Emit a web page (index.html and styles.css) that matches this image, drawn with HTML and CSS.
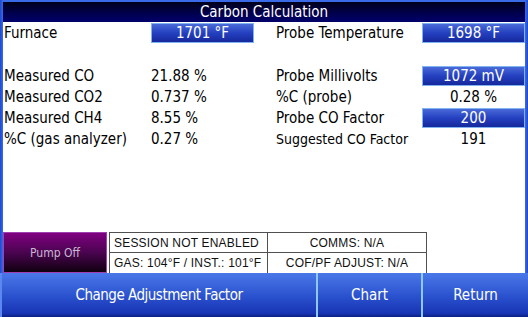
FILE: index.html
```html
<!DOCTYPE html>
<html>
<head>
<meta charset="utf-8">
<link rel="stylesheet" href="styles.css">
</head>
<body>
<div class="screen">
  <div class="title">Carbon Calculation</div>
  <div class="content">
    <div class="row first">
      <div class="half left">
        <span class="label">Furnace</span>
        <span class="box">1701 °F</span>
      </div>
      <div class="half right">
        <span class="label">Probe Temperature</span>
        <span class="box">1698 °F</span>
      </div>
    </div>
    <div class="block">
      <div class="row">
        <div class="half left"><span class="label">Measured CO</span><span class="val">21.88 %</span></div>
        <div class="half right"><span class="label">Probe Millivolts</span><span class="box">1072 mV</span></div>
      </div>
      <div class="row">
        <div class="half left"><span class="label">Measured CO2</span><span class="val">0.737 %</span></div>
        <div class="half right"><span class="label">%C (probe)</span><span class="cval">0.28 %</span></div>
      </div>
      <div class="row">
        <div class="half left"><span class="label">Measured CH4</span><span class="val">8.55 %</span></div>
        <div class="half right"><span class="label">Probe CO Factor</span><span class="box">200</span></div>
      </div>
      <div class="row">
        <div class="half left"><span class="label">%C (gas analyzer)</span><span class="val">0.27 %</span></div>
        <div class="half right"><span class="label small">Suggested CO Factor</span><span class="cval">191</span></div>
      </div>
    </div>
  </div>
  <div class="status">
    <div class="pump">Pump Off</div>
    <div class="table">
      <div class="cell">SESSION NOT ENABLED</div>
      <div class="cell c">COMMS: N/A</div>
      <div class="cell">GAS: 104°F / INST.: 101°F</div>
      <div class="cell c">COF/PF ADJUST: N/A</div>
    </div>
  </div>
  <div class="buttons">
    <div class="btn wide">Change Adjustment Factor</div>
    <div class="btn mid">Chart</div>
    <div class="btn last">Return</div>
  </div>
</div>
</body>
</html>
```
FILE: styles.css
```css
html, body {
  margin: 0;
  padding: 0;
  background: #2a56d8;
}
.screen {
  width: 528px;
  height: 317px;
  display: flex;
  flex-direction: column;
  font-family: "DejaVu Sans Condensed", "DejaVu Sans", sans-serif;
  background: linear-gradient(90deg, #1c48d0 0, #3a6ae8 3px, #3a6ae8 525px, #1c48d0 528px);
  overflow: hidden;
}
.title {
  margin: 2px 3px 0 3px;
  height: 20px;
  background: linear-gradient(#00001c, #000050 60%, #00006c);
  color: #ffffff;
  font-size: 15px;
  text-align: center;
  line-height: 20px;
}
.content {
  margin: 0 3px;
  background: #ffffff;
  height: 210px;
  font-size: 15px;
  color: #000000;
}
.row {
  display: flex;
  height: 21px;
  align-items: center;
}
.row.first {
  height: 20px;
  margin-top: 1px;
}
.block {
  margin-top: 22px;
}
.half {
  display: flex;
  align-items: center;
  height: 100%;
}
.half.left {
  width: 273px;
}
.half.right {
  width: 249px;
}
.left .label {
  width: 147px;
  padding-left: 1px;
}
.right .label {
  width: 146px;
}
.label.small {
  font-size: 14px;
}
.box {
  width: 101px;
  height: 18px;
  border: 1px solid #7fb4f0;
  background: linear-gradient(#4a6ad8, #2440c0 50%, #16289c);
  color: #ffffff;
  text-align: center;
  line-height: 18px;
}
.val {
  padding-left: 0;
}
.cval {
  width: 103px;
  text-align: center;
}
.status {
  display: flex;
  height: 41px;
  margin: 0 3px;
  background: #ffffff;
}
.pump {
  width: 102px;
  height: 39px;
  border: 1px solid #a040b0;
  background: linear-gradient(#800080, #4a0450 50%, #100010);
  color: #c8b8d0;
  font-size: 12px;
  display: flex;
  align-items: center;
  justify-content: center;
}
.table {
  margin-left: 2px;
  width: 316px;
  height: 40px;
  border: 1px solid #505050;
  display: grid;
  grid-template-columns: 158px 158px;
  grid-template-rows: 20px 20px;
  font-family: "Liberation Sans", Arial, sans-serif;
  font-size: 12px;
  color: #101010;
}
.cell {
  display: flex;
  align-items: center;
  padding-left: 4px;
  border-right: 1px solid #505050;
  border-bottom: 1px solid #505050;
  letter-spacing: 0.2px;
}
.cell.c {
  justify-content: center;
  padding-left: 0;
  border-right: none;
}
.cell:nth-child(3), .cell:nth-child(4) {
  border-bottom: none;
}
.buttons {
  display: flex;
  height: 44px;
  background: linear-gradient(#4a78e8, #2c54d0 50%, #1834b4 92%, #0c2080 100%);
  border-left: 2px solid #5a88f0;
}
.btn {
  color: #ffffff;
  font-size: 15px;
  display: flex;
  align-items: center;
  justify-content: center;
}
.btn.wide {
  width: 314px;
  letter-spacing: -0.5px;
}
.btn.mid {
  width: 103px;
  border-left: 2px solid #8cc8f8;
  border-right: 2px solid #8cc8f8;
}
.btn.last {
  flex: 1;
}
```
